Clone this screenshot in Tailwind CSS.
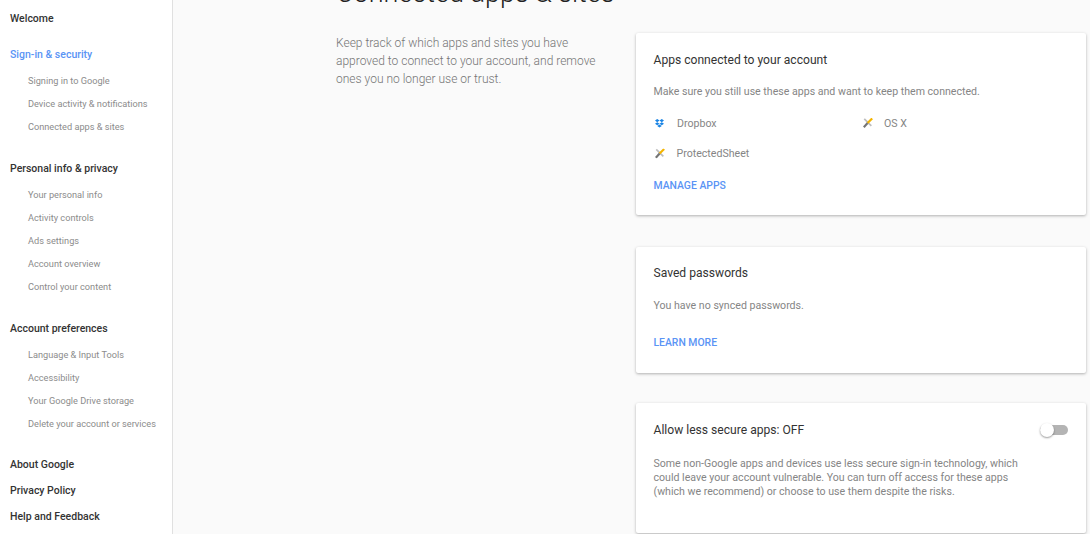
<!DOCTYPE html>
<html>
<head>
<meta charset="utf-8">
<script src="https://cdn.jsdelivr.net/npm/@tailwindcss/browser@4"></script>
</head>
<body class="m-0 overflow-hidden bg-[#fafafa]">
<div class="flex h-[534px] w-[1090px] overflow-hidden font-['Roboto',sans-serif]">
  <nav class="w-[173px] shrink-0 border-r border-[#e0e0e0] bg-white pl-[10px] text-[#333333]">
    <div class="mt-[11px] h-4 text-[10.5px] font-medium leading-4">Welcome</div>
    <div class="mt-[20px] h-4 text-[10.5px] font-medium leading-4 text-[#5a94f5]">Sign-in &amp; security</div>
    <ul class="ml-[18px] mt-[9px] flex flex-col gap-[5px] text-[9.2px] leading-[18px] text-[#8c8c8c]">
      <li>Signing in to Google</li>
      <li>Device activity &amp; notifications</li>
      <li>Connected apps &amp; sites</li>
    </ul>
    <div class="mt-[25px] h-4 text-[10.5px] font-medium leading-4">Personal info &amp; privacy</div>
    <ul class="ml-[18px] mt-[9px] flex flex-col gap-[5px] text-[9.2px] leading-[18px] text-[#8c8c8c]">
      <li>Your personal info</li>
      <li>Activity controls</li>
      <li>Ads settings</li>
      <li>Account overview</li>
      <li>Control your content</li>
    </ul>
    <div class="mt-[25px] h-4 text-[10.5px] font-medium leading-4">Account preferences</div>
    <ul class="ml-[18px] mt-[9px] flex flex-col gap-[5px] text-[9.2px] leading-[18px] text-[#8c8c8c]">
      <li>Language &amp; Input Tools</li>
      <li>Accessibility</li>
      <li>Your Google Drive storage</li>
      <li>Delete your account or services</li>
    </ul>
    <div class="mt-[24px] h-4 text-[10.5px] font-medium leading-4">About Google</div>
    <div class="mt-[10px] h-4 text-[10.5px] font-medium leading-4">Privacy Policy</div>
    <div class="mt-[10px] h-4 text-[10.5px] font-medium leading-4">Help and Feedback</div>
  </nav>
  <main class="min-w-0 flex-1">
    <h1 class="ml-[163px] mt-[-23px] h-[56px] whitespace-nowrap text-[27px] font-light leading-[32px] text-[#212121]">Connected apps &amp; sites</h1>
    <div class="flex">
      <p class="ml-[163px] mt-[1px] w-[270px] shrink-0 text-[12px] font-light leading-[18px] text-[#757575]">Keep track of which apps and sites you have approved to connect to your account, and remove ones you no longer use or trust.</p>
      <div class="ml-[30px] flex w-[450px] shrink-0 flex-col">
        <section class="h-[182px] rounded-[2px] bg-white pl-[17.5px] pr-[18px] pt-[19px] shadow-[0_1px_3px_rgba(0,0,0,0.3)]">
          <h2 class="text-[12.1px] leading-4 text-[#333333]">Apps connected to your account</h2>
          <p class="mt-[17px] text-[10.6px] leading-[14px] text-[#858585]">Make sure you still use these apps and want to keep them connected.</p>
          <div class="mt-[17px] grid grid-cols-[207px_1fr] gap-y-[14px] text-[10.6px] leading-4 text-[#858585]">
            <div class="flex items-center">
              <svg class="ml-[1.5px] mr-[13px] h-[9px] w-[9px] shrink-0 -translate-y-[1px]" viewBox="0 0 9 9"><path d="M2.2 0 0 1.5l2.2 1.7L4.500 1.500ZM6.800 0 9 1.500 6.800 3.200 4.500 1.500ZM0 4.800 2.200 6.300 4.500 4.800 2.200 3.200ZM9 4.800 6.800 6.300 4.500 4.800 6.800 3.200ZM2.200 7 4.500 8.600 6.800 7 4.500 5.400Z" fill="#1a84e4"/></svg>
              <span>Dropbox</span>
            </div>
            <div class="flex items-center">
              <svg class="ml-[2.5px] mr-[11px] h-[10px] w-[10px] shrink-0 -translate-y-[1px]" viewBox="0 0 12 12"><path d="M1.500 1 10 9.500" stroke="#bdbdbd" stroke-width="2"/><path d="M11 .5 5.500 6" stroke="#f4b400" stroke-width="2.600"/><path d="M5.500 6 1 11" stroke="#757575" stroke-width="2.600"/></svg>
              <span>OS X</span>
            </div>
            <div class="flex items-center">
              <svg class="ml-[1.5px] mr-[11.5px] h-[10px] w-[10px] shrink-0 -translate-y-[0.5px]" viewBox="0 0 12 12"><path d="M1.500 1 10 9.500" stroke="#bdbdbd" stroke-width="2"/><path d="M11 .5 5.500 6" stroke="#f4b400" stroke-width="2.600"/><path d="M5.500 6 1 11" stroke="#757575" stroke-width="2.600"/></svg>
              <span>ProtectedSheet</span>
            </div>
          </div>
          <a class="mt-[16px] block text-[10.4px] font-medium leading-4 text-[#5a94f5]">MANAGE APPS</a>
        </section>
        <section class="mt-[32px] h-[126px] rounded-[2px] bg-white pl-[17.5px] pr-[18px] pt-[18px] shadow-[0_1px_3px_rgba(0,0,0,0.3)]">
          <h2 class="text-[12.1px] leading-4 text-[#333333]">Saved passwords</h2>
          <p class="mt-[18px] text-[10.6px] leading-[14px] text-[#858585]">You have no synced passwords.</p>
          <a class="mt-[22px] block text-[10.4px] font-medium leading-4 text-[#5a94f5]">LEARN MORE</a>
        </section>
        <section class="mt-[30px] h-[130px] rounded-[2px] bg-white pl-[17.5px] pr-[18px] pt-[19px] shadow-[0_1px_3px_rgba(0,0,0,0.3)]">
          <div class="flex items-center justify-between">
            <h2 class="text-[12.1px] leading-4 text-[#333333]">Allow less secure apps: OFF</h2>
            <div class="relative h-[10px] w-[28px] rounded-full bg-[#b4b4b4]">
              <div class="absolute left-0 top-[-2px] h-[14px] w-[14px] rounded-full bg-white shadow-[0_1px_2px_rgba(0,0,0,0.4)]"></div>
            </div>
          </div>
          <p class="mt-[19px] w-[385px] text-[10.6px] leading-[14px] text-[#858585]">Some non-Google apps and devices use less secure sign-in technology, which could leave your account vulnerable. You can turn off access for these apps (which we recommend) or choose to use them despite the risks.</p>
        </section>
      </div>
    </div>
  </main>
</div>
</body>
</html>
